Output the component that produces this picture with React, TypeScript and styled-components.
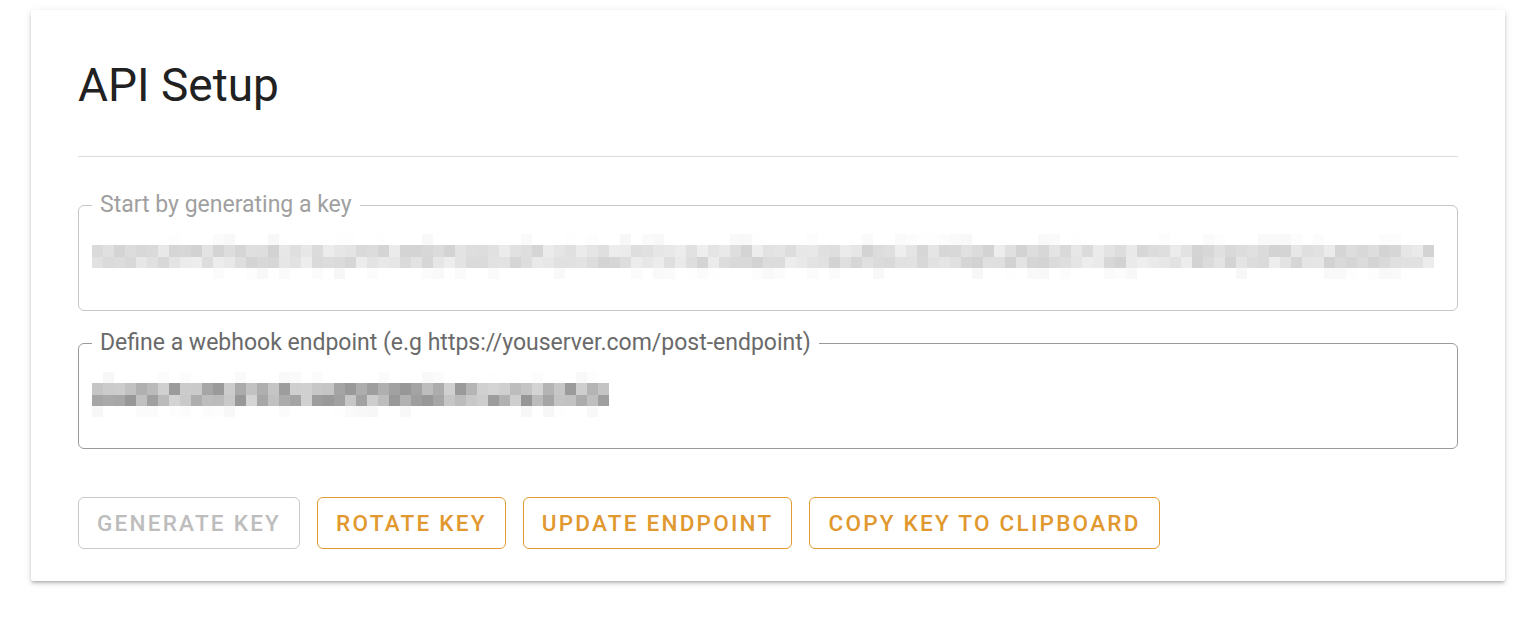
import React from "react";
import styled, { createGlobalStyle } from "styled-components";

const GlobalStyle = createGlobalStyle`
    body {
        margin: 0;
        background: #ffffff;
        font-family: Roboto, "Liberation Sans", sans-serif;
    }
`;

const Page = styled.div`
    padding: 10px 31px;
`;

const Card = styled.section`
    background: #ffffff;
    border-radius: 2px;
    padding: 48px 47px 32px;
    box-shadow: 0 2px 3px -1px rgba(0, 0, 0, 0.25), 0 3px 5px rgba(0, 0, 0, 0.1), 0 1px 8px rgba(0, 0, 0, 0.08);
`;

const Title = styled.h2`
    margin: 0;
    font-size: 46px;
    font-weight: 400;
    line-height: 54px;
    color: #212121;
`;

const Divider = styled.hr`
    margin: 44px 0 34px;
    border: none;
    height: 1px;
    background: #dcdcdc;
`;

const Field = styled.fieldset<{ $tone: "light" | "dark" }>`
    margin: 0;
    height: 120px;
    box-sizing: border-box;
    padding: 0 13px;
    border: 1px solid ${p => (p.$tone === "light" ? "#c6c6c6" : "#9a9a9a")};
    border-radius: 6px;
    display: flex;
    flex-direction: column;
    justify-content: center;
    & + & {
        margin-top: 18px;
    }
`;

const Legend = styled.legend<{ $tone: "light" | "dark" }>`
    padding: 0 8px;
    font-size: 23px;
    line-height: 28px;
    color: ${p => (p.$tone === "light" ? "#a0a0a0" : "#6a6a6a")};
`;

const Blur = styled.svg`
    display: block;
    margin-top: -16px;
`;

const Actions = styled.div`
    display: flex;
    gap: 17px;
    margin-top: 48px;
`;

const Button = styled.button<{ $disabled?: boolean }>`
    height: 52px;
    padding: 0 18px;
    background: transparent;
    border: 1.5px solid ${p => (p.$disabled ? "#c9c9c9" : "#e29b33")};
    border-radius: 6px;
    font-family: Roboto, "Liberation Sans", sans-serif;
    font-size: 22.5px;
    font-weight: 500;
    letter-spacing: 2.25px;
    color: ${p => (p.$disabled ? "#bdbdbd" : "#e0982f")};
    cursor: ${p => (p.$disabled ? "default" : "pointer")};
`;

// pseudo-random blocks that look like pixelated, blurred text
function rand(seed: number) {
    let s = seed;
    return () => {
        s = (s * 9301 + 49297) % 233280;
        return s / 233280;
    };
}

function Pixelated({ width, min, max, seed }: { width: number; min: number; max: number; seed: number }) {
    const r = rand(seed);
    const cell = 11;
    const cols = Math.floor(width / cell);
    const rects: React.ReactNode[] = [];
    const rowH = [11, 12, 11, 11];
    let y = 0;
    rowH.forEach((h, row) => {
        for (let c = 0; c < cols; c++) {
            const edge = row === 0 || row === 3;
            const t = r();
            let v: number;
            if (edge) v = 235 + Math.round(t * 20);
            else v = min + Math.round(t * (max - min));
            if (edge && t < 0.6) continue;
            rects.push(<rect key={row + "-" + c} x={c * cell} y={y} width={cell} height={h} fill={`rgb(${v},${v},${v})`} />);
        }
        y += h;
    });
    return (
        <Blur width={cols * cell} height={45} viewBox={`0 0 ${cols * cell} 45`}>
            {rects}
        </Blur>
    );
}

export default function App() {
    return (
        <Page>
            <GlobalStyle />
            <Card>
                <Title>API Setup</Title>
                <Divider />
                <Field $tone="light">
                    <Legend $tone="light">Start by generating a key</Legend>
                    <Pixelated width={1350} min={210} max={238} seed={7} />
                </Field>
                <Field $tone="dark">
                    <Legend $tone="dark">Define a webhook endpoint (e.g https://youserver.com/post-endpoint)</Legend>
                    <Pixelated width={518} min={150} max={215} seed={31} />
                </Field>
                <Actions>
                    <Button $disabled disabled>GENERATE KEY</Button>
                    <Button>ROTATE KEY</Button>
                    <Button>UPDATE ENDPOINT</Button>
                    <Button>COPY KEY TO CLIPBOARD</Button>
                </Actions>
            </Card>
        </Page>
    );
}
